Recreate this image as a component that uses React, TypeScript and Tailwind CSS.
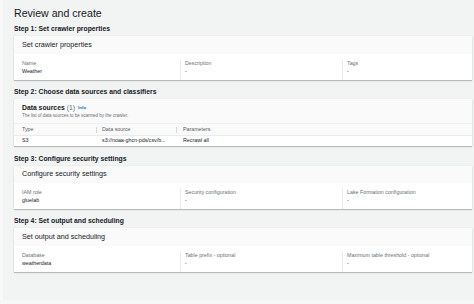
import React from "react";

const font = { fontFamily: '"Liberation Sans", Arial, sans-serif' };

function Field({ label, value, first }: { label: string; value: string; first?: boolean }) {
  return (
    <div className={first ? "pl-[8px]" : "border-l border-[#eaeded] pl-[4px]"}>
      <div className="text-[5.3px] leading-[8px] text-[#687078] whitespace-nowrap">{label}</div>
      <div className="text-[5.3px] leading-[8px] text-[#16191f] whitespace-nowrap">{value}</div>
    </div>
  );
}

function KVCard({ title, fields, headerH }: { title: string; fields: [string, string][]; headerH: string }) {
  return (
    <div className="bg-white shadow-[0_1px_1px_rgba(0,0,0,0.22),0_0_1px_rgba(0,0,0,0.12)]">
      <div className={`${headerH} bg-[#fafafa] flex items-center pl-[8px] text-[7.2px] text-[#16191f] whitespace-nowrap`}>
        {title}
      </div>
      <div className="h-[26px] pt-[5px] grid grid-cols-[166px_162px_1fr]">
        {fields.map(([l, v], i) => (
          <Field key={l} label={l} value={v} first={i === 0} />
        ))}
      </div>
    </div>
  );
}

function Step({ children, mt }: { children: React.ReactNode; mt: string }) {
  return (
    <div className={`${mt} mb-[2px] text-[6.8px] leading-[10px] font-bold text-[#16191f] whitespace-nowrap`}>
      {children}
    </div>
  );
}

export default function App() {
  return (
    <div
      style={font}
      className="w-[474px] h-[304px] bg-[#f2f3f3] overflow-hidden border-l-[3px] border-l-[#f8f8f8] border-b-[4px] border-b-[#f8f8f8]"
    >
      <div className="pl-[11px] pr-[2px]">
        <div className="mt-[7px] text-[10.6px] leading-[12px] text-[#16191f] whitespace-nowrap">Review and create</div>

        <Step mt="mt-[5px]">Step 1: Set crawler properties</Step>
        <KVCard
          title="Set crawler properties"
          headerH="h-[18px]"
          fields={[
            ["Name", "Weather"],
            ["Description", "-"],
            ["Tags", "-"],
          ]}
        />

        <Step mt="mt-[7px]">Step 2: Choose data sources and classifiers</Step>
        <div className="mt-[1px] bg-white shadow-[0_1px_1px_rgba(0,0,0,0.22),0_0_1px_rgba(0,0,0,0.12)]">
          <div className="h-[24px] bg-[#fafafa] pl-[8px] pt-[4px]">
            <div className="flex items-center leading-[10px] whitespace-nowrap">
              <span className="text-[6.8px] font-bold text-[#16191f]">Data sources</span>
              <span className="text-[6.8px] text-[#687078] ml-[2px]">(1)</span>
              <span className="text-[4.4px] font-bold text-[#0073bb] ml-[3px]">Info</span>
            </div>
            <div className="text-[4.5px] leading-[5px] text-[#687078] whitespace-nowrap">
              The list of data sources to be scanned by the crawler.
            </div>
          </div>
          <div className="h-[12px] bg-[#fafafa] border-t border-[#f0f0f0] grid grid-cols-[82px_80px_1fr] items-center text-[5.3px] text-[#545b64] whitespace-nowrap">
            <div className="pl-[8px]">Type</div>
            <div className="flex items-center">
              <span className="w-px h-[6px] bg-[#d5dbdb]" />
              <span className="pl-[5px]">Data source</span>
            </div>
            <div className="flex items-center">
              <span className="w-px h-[6px] bg-[#d5dbdb]" />
              <span className="pl-[6px]">Parameters</span>
            </div>
          </div>
          <div className="h-[11px] border-t border-[#eaeded] grid grid-cols-[82px_80px_1fr] items-center text-[5.3px] text-[#16191f] whitespace-nowrap">
            <div className="pl-[8px]">S3</div>
            <div className="pl-[6px]">s3://noaa-ghcn-pds/csv/b...</div>
            <div className="pl-[7px]">Recrawl all</div>
          </div>
        </div>

        <Step mt="mt-[8px]">Step 3: Configure security settings</Step>
        <KVCard
          title="Configure security settings"
          headerH="h-[17px]"
          fields={[
            ["IAM role", "gluelab"],
            ["Security configuration", "-"],
            ["Lake Formation configuration", "-"],
          ]}
        />

        <Step mt="mt-[7px]">Step 4: Set output and scheduling</Step>
        <KVCard
          title="Set output and scheduling"
          headerH="h-[18px]"
          fields={[
            ["Database", "weatherdata"],
            ["Table prefix - optional", "-"],
            ["Maximum table threshold - optional", "-"],
          ]}
        />
      </div>
    </div>
  );
}
